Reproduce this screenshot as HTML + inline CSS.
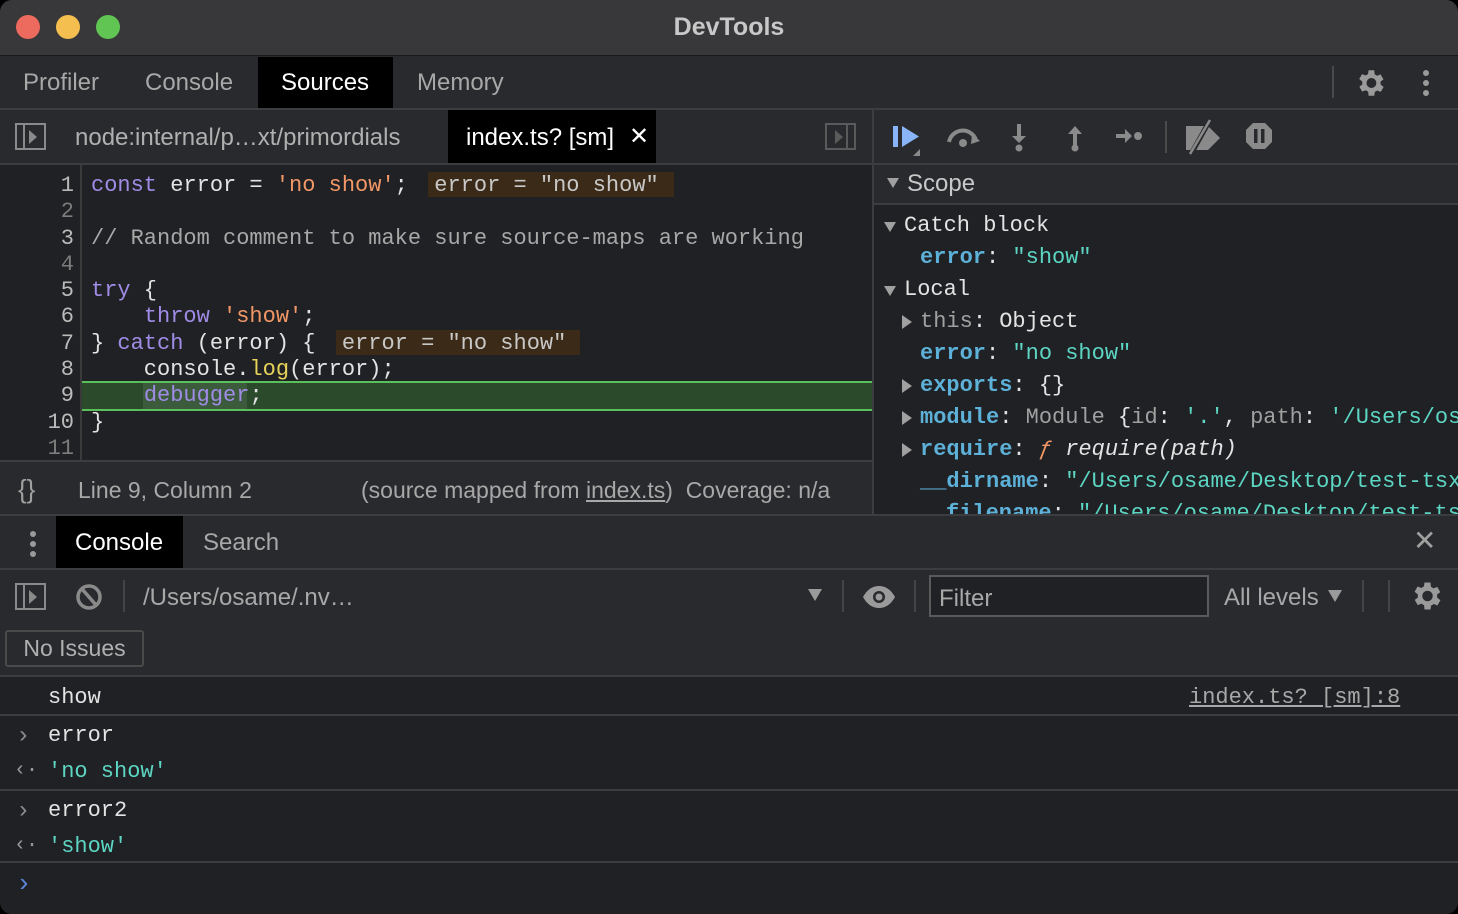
<!DOCTYPE html>
<html><head><meta charset="utf-8"><style>
*{margin:0;padding:0;box-sizing:border-box}
body{width:1458px;height:914px;background:#000;overflow:hidden;font-family:"Liberation Sans",sans-serif;position:relative}
.win{position:absolute;left:0;top:0;width:1458px;height:914px;background:#292a2d;border-radius:12px;overflow:hidden}
.abs{position:absolute}
.mono{font-family:"Liberation Mono",monospace}
.title{left:0;top:0;width:1458px;height:56px;background:#38383a;border-bottom:1px solid #1a1a1a}
.dot{width:24px;height:24px;border-radius:50%;top:15px}
.hl{height:2px;background:#3c3d40;left:0;width:1458px}
.tab{font-size:24px;color:#a8a8a8;top:57px;height:51px;line-height:51px}
.code{font-size:22px;line-height:26.3px;color:#e3e3e3;white-space:pre}
.kw{color:#a08ce6}.str{color:#f29766}.cm{color:#a8a8a8}.fn{color:#e6d35a}
.ln{color:#7d7d7d;font-size:22px;text-align:right;width:74px;white-space:pre;line-height:26.3px}
.sc{font-size:22px;white-space:pre;color:#e3e3e3;line-height:32px;height:32px;position:absolute}
.k{color:#5db0d7;font-weight:bold}.s{color:#5cd5c3}.g{color:#a0a0a0}
.tri{position:absolute;left:-20px;top:12px;width:0;height:0;border-left:6px solid transparent;border-right:6px solid transparent;border-top:10px solid #a0a0a0}
.trr{position:absolute;left:-18px;top:9px;width:0;height:0;border-top:7px solid transparent;border-bottom:7px solid transparent;border-left:10px solid #a0a0a0}
</style></head><body><div class="win">
<div class="abs title"></div>
<div class="abs dot" style="left:16px;background:#ed6a5e"></div>
<div class="abs dot" style="left:56px;background:#f5bf4f"></div>
<div class="abs dot" style="left:96px;background:#61c554"></div>
<div class="abs" style="left:0;width:1458px;top:13px;text-align:center;color:#c8c8c8;font-size:25px;font-weight:bold">DevTools</div>

<div class="abs" style="left:258px;top:57px;width:135px;height:51px;background:#000"></div>
<div class="abs tab" style="left:23px">Profiler</div>
<div class="abs tab" style="left:145px">Console</div>
<div class="abs tab" style="left:281px;color:#fff">Sources</div>
<div class="abs tab" style="left:417px">Memory</div>
<div class="abs" style="left:1332px;top:66px;width:2px;height:32px;background:#4a4a4a"></div>
<svg class="abs" style="left:1353px;top:66px" width="34" height="34" viewBox="0 0 24 24"><path fill="#9a9a9a" d="M19.4 13a7.5 7.5 0 000-2l2.1-1.6-2-3.5-2.5 1a7.4 7.4 0 00-1.7-1L15 3h-4l-.4 2.7a7.4 7.4 0 00-1.7 1l-2.5-1-2 3.5L6.6 11a7.5 7.5 0 000 2l-2.1 1.6 2 3.5 2.5-1a7.4 7.4 0 001.7 1L11 21h4l.4-2.7a7.4 7.4 0 001.7-1l2.5 1 2-3.5zM13 15.5a3.5 3.5 0 110-7 3.5 3.5 0 010 7z"/></svg>
<div class="abs" style="left:1423px;top:70px;width:6px;height:6px;border-radius:50%;background:#9a9a9a;box-shadow:0 10px 0 #9a9a9a,0 20px 0 #9a9a9a"></div>
<div class="abs hl" style="top:108px"></div>

<!-- file tabs -->
<svg class="abs" style="left:15px;top:123px" width="32" height="28"><rect x="1" y="1" width="29" height="25" fill="none" stroke="#8a8a8a" stroke-width="2"/><line x1="9" y1="1" x2="9" y2="26" stroke="#8a8a8a" stroke-width="2"/><path d="M14 7l8 7-8 7z" fill="#8a8a8a"/></svg>
<div class="abs" style="left:75px;top:111px;height:53px;line-height:53px;font-size:24px;color:#b0b0b0">node:internal/p…xt/primordials</div>
<div class="abs" style="left:448px;top:110px;width:208px;height:53px;background:#000"></div>
<div class="abs" style="left:466px;top:111px;height:53px;line-height:53px;font-size:24px;color:#fff">index.ts? [sm]</div>
<div class="abs" style="left:629px;top:111px;height:53px;line-height:51px;font-size:24px;color:#fff">✕</div>
<svg class="abs" style="left:825px;top:123px" width="32" height="28"><rect x="1" y="1" width="29" height="25" fill="none" stroke="#5a5a5a" stroke-width="2"/><line x1="22" y1="1" x2="22" y2="26" stroke="#5a5a5a" stroke-width="2"/><path d="M10 7l8 7-8 7z" fill="#5a5a5a"/></svg>
<div class="abs" style="left:0;top:163px;width:873px;height:2px;background:#3c3d40"></div>

<!-- editor -->
<div class="abs" style="left:0;top:165px;width:873px;height:295px;background:#202124"></div>
<div class="abs" style="left:80px;top:165px;width:2px;height:295px;background:#3a3a3a"></div>
<div class="abs" style="left:82px;top:381px;width:791px;height:30px;background:#2b4a2b;border-top:2px solid #5bbf5b;border-bottom:2px solid #5bbf5b"></div>
<div class="abs" style="left:428px;top:172px;width:246px;height:25px;background:#3b2a17"></div>
<div class="abs" style="left:336px;top:330px;width:244px;height:25px;background:#3b2a17"></div>
<div class="abs" style="left:143px;top:383px;width:104px;height:26px;background:#3c5a3c"></div>
<div class="abs mono ln" style="left:0;top:173px"><span style="color:#bbb">1</span>
2
<span style="color:#bbb">3</span>
4
<span style="color:#bbb">5
6
7
8
9
10</span>
11</div>
<div class="abs mono code" style="left:91px;top:173px"><span class="kw">const</span> error = <span class="str">'no show'</span>;  <span style="color:#c8c8c8">error = "no show"</span>

<span class="cm">// Random comment to make sure source-maps are working</span>

<span class="kw">try</span> {
    <span class="kw">throw</span> <span class="str">'show'</span>;
} <span class="kw">catch</span> (error) {  <span style="color:#c8c8c8">error = "no show"</span>
    console.<span class="fn">log</span>(error);
    <span class="kw">debugger</span>;
}</div>
<div class="abs" style="left:0;top:460px;width:873px;height:2px;background:#3c3d40"></div>
<div class="abs" style="left:18px;top:474px;font-size:26px;color:#a0a0a0">{}</div>
<div class="abs" style="left:78px;top:477px;font-size:23px;color:#a8a8a8">Line 9, Column 2</div>
<div class="abs" style="left:361px;top:477px;font-size:23px;color:#a8a8a8">(source mapped from <u>index.ts</u>)&nbsp; Coverage: n/a</div>

<!-- right pane -->
<div class="abs" style="left:872px;top:109px;width:2px;height:406px;background:#3c3d40"></div>
<svg class="abs" style="left:892px;top:122px" width="300" height="36">
<rect x="1" y="4" width="5" height="21" fill="#8ab4f8"/><path d="M10 4l17 10.5L10 25z" fill="#8ab4f8"/><path d="M28 34v-7l-7 7z" fill="#8a8a8a"/>
<path d="M57 20a14 14 0 0 1 27 -2" fill="none" stroke="#8a8a8a" stroke-width="4"/><path d="M80 12l8 7-9 3z" fill="#8a8a8a"/><circle cx="71" cy="21" r="4" fill="#8a8a8a"/>
<path d="M125 2v12h-5l7 7 7-7h-5V2z" fill="#8a8a8a"/><circle cx="127" cy="26" r="3.5" fill="#8a8a8a"/>
<path d="M181 24V12h-5l7-8 7 8h-5v12z" fill="#8a8a8a"/><circle cx="183" cy="26" r="3.5" fill="#8a8a8a"/>
<path d="M224 12h9v-5l7 7-7 7v-5h-9z" fill="#8a8a8a"/><circle cx="246" cy="14" r="4" fill="#8a8a8a"/>
</svg>
<div class="abs" style="left:1165px;top:121px;width:2px;height:32px;background:#4a4a4a"></div>
<svg class="abs" style="left:1184px;top:118px" width="100" height="38"><path d="M2 8h22l12 12-12 12H2z" fill="#8a8a8a"/><line x1="6" y1="38" x2="26" y2="2" stroke="#292a2d" stroke-width="5"/><line x1="6" y1="36" x2="26" y2="2" stroke="#8a8a8a" stroke-width="2.5"/>
<path d="M69 5h12l7 7v12l-7 7H69l-7-7V12z" fill="#8a8a8a"/><rect x="70" y="11" width="3.5" height="14" fill="#292a2d"/><rect x="77" y="11" width="3.5" height="14" fill="#292a2d"/></svg>
<div class="abs" style="left:874px;top:163px;width:584px;height:2px;background:#3c3d40"></div>
<div class="abs" style="left:887px;top:178px;width:0;height:0;border-left:6px solid transparent;border-right:6px solid transparent;border-top:10px solid #a0a0a0"></div>
<div class="abs" style="left:907px;top:170px;font-size:24px;color:#c8c8c8">Scope</div>
<div class="abs" style="left:874px;top:203px;width:584px;height:2px;background:#3c3d40"></div>
<div class="abs" style="left:874px;top:205px;width:584px;height:309px;background:#202124;overflow:hidden">
<div class="mono sc" style="left:30px;top:5px"><span class="tri"></span>Catch block</div>
<div class="mono sc" style="left:46px;top:37px"><span class="k">error</span>: <span class="s">"show"</span></div>
<div class="mono sc" style="left:30px;top:69px"><span class="tri"></span>Local</div>
<div class="mono sc" style="left:46px;top:101px"><span class="trr"></span><span class="g">this</span>: Object</div>
<div class="mono sc" style="left:46px;top:133px"><span class="k">error</span>: <span class="s">"no show"</span></div>
<div class="mono sc" style="left:46px;top:165px"><span class="trr"></span><span class="k">exports</span>: {}</div>
<div class="mono sc" style="left:46px;top:197px"><span class="trr"></span><span class="k">module</span>: <span class="g">Module</span> {<span class="g">id</span>: <span class="s">'.'</span>, <span class="g">path</span>: <span class="s">'/Users/osame/Desktop</span></div>
<div class="mono sc" style="left:46px;top:229px"><span class="trr"></span><span class="k">require</span>: <i style="color:#f29766">ƒ</i> <i>require(path)</i></div>
<div class="mono sc" style="left:46px;top:261px"><span class="k">__dirname</span>: <span class="s">"/Users/osame/Desktop/test-tsx"</span></div>
<div class="mono sc" style="left:72px;top:293px"><span class="k">filename</span>: <span class="s">"/Users/osame/Desktop/test-tsx"</span></div>
</div>

<!-- drawer -->
<div class="abs hl" style="top:514px"></div>
<div class="abs" style="left:30px;top:531px;width:6px;height:6px;border-radius:50%;background:#9a9a9a;box-shadow:0 10px 0 #9a9a9a,0 20px 0 #9a9a9a"></div>
<div class="abs" style="left:56px;top:516px;width:127px;height:52px;background:#000"></div>
<div class="abs" style="left:75px;top:517px;height:52px;line-height:52px;font-size:24px;color:#fff">Console</div>
<div class="abs" style="left:203px;top:517px;height:52px;line-height:52px;font-size:24px;color:#a8a8a8">Search</div>
<div class="abs" style="left:1413px;top:524px;font-size:28px;color:#a0a0a0">✕</div>
<div class="abs hl" style="top:568px"></div>
<svg class="abs" style="left:15px;top:583px" width="32" height="28"><rect x="1" y="1" width="29" height="25" fill="none" stroke="#8a8a8a" stroke-width="2"/><line x1="9" y1="1" x2="9" y2="26" stroke="#8a8a8a" stroke-width="2"/><path d="M14 7l8 7-8 7z" fill="#8a8a8a"/></svg>
<svg class="abs" style="left:75px;top:583px" width="28" height="28"><circle cx="14" cy="14" r="11" fill="none" stroke="#8a8a8a" stroke-width="3.5"/><line x1="7" y1="6" x2="21" y2="22" stroke="#8a8a8a" stroke-width="3.5"/></svg>
<div class="abs" style="left:123px;top:580px;width:2px;height:32px;background:#444"></div>
<div class="abs" style="left:143px;top:584px;font-size:24px;color:#a8a8a8">/Users/osame/.nv…</div>
<div class="abs" style="left:808px;top:589px;width:0;height:0;border-left:7px solid transparent;border-right:7px solid transparent;border-top:12px solid #9a9a9a"></div>
<div class="abs" style="left:842px;top:580px;width:2px;height:32px;background:#444"></div>
<svg class="abs" style="left:862px;top:585px" width="34" height="24"><path d="M1 12C6 3 12 1 17 1s11 2 16 11c-5 9-11 11-16 11S6 21 1 12z" fill="#9a9a9a"/><circle cx="17" cy="12" r="6" fill="#292a2d"/><circle cx="17" cy="12" r="3.5" fill="#9a9a9a"/></svg>
<div class="abs" style="left:914px;top:580px;width:2px;height:32px;background:#444"></div>
<div class="abs" style="left:929px;top:575px;width:280px;height:42px;background:#202124;border:2px solid #5a5a5a;font-size:24px;color:#a8a8a8;padding:8px 8px">Filter</div>
<div class="abs" style="left:1224px;top:584px;font-size:24px;color:#a8a8a8">All levels</div>
<div class="abs" style="left:1328px;top:590px;width:0;height:0;border-left:7px solid transparent;border-right:7px solid transparent;border-top:12px solid #9a9a9a"></div>
<div class="abs" style="left:1362px;top:580px;width:2px;height:32px;background:#444"></div>
<div class="abs" style="left:1388px;top:580px;width:2px;height:32px;background:#444"></div>
<svg class="abs" style="left:1408px;top:578px" width="36" height="36" viewBox="0 0 24 24"><path fill="#9a9a9a" d="M19.4 13a7.5 7.5 0 000-2l2.1-1.6-2-3.5-2.5 1a7.4 7.4 0 00-1.7-1L15 3h-4l-.4 2.7a7.4 7.4 0 00-1.7 1l-2.5-1-2 3.5L6.6 11a7.5 7.5 0 000 2l-2.1 1.6 2 3.5 2.5-1a7.4 7.4 0 001.7 1L11 21h4l.4-2.7a7.4 7.4 0 001.7-1l2.5 1 2-3.5zM13 15.5a3.5 3.5 0 110-7 3.5 3.5 0 010 7z"/></svg>
<div class="abs" style="left:5px;top:630px;width:139px;height:37px;border:2px solid #4a4a4a;border-radius:3px;font-size:23px;color:#b0b0b0;text-align:center;line-height:33px">No Issues</div>
<div class="abs hl" style="top:675px"></div>
<div class="abs" style="left:0;top:677px;width:1458px;height:237px;background:#202124"></div>
<div class="abs mono" style="left:48px;top:685px;font-size:22px;color:#e3e3e3">show</div>
<div class="abs mono" style="left:1189px;top:685px;font-size:22px;color:#a8a8a8;text-decoration:underline">index.ts? [sm]:8</div>
<div class="abs hl" style="top:714px"></div>
<div class="abs mono" style="left:16px;top:723px;font-size:24px;color:#8a8a8a">›</div>
<div class="abs mono" style="left:48px;top:723px;font-size:22px;color:#e3e3e3">error</div>
<div class="abs mono" style="left:14px;top:759px;font-size:20px;color:#9a9a9a">‹·</div>
<div class="abs mono" style="left:48px;top:759px;font-size:22px;color:#5cd5c3">'no show'</div>
<div class="abs hl" style="top:789px"></div>
<div class="abs mono" style="left:16px;top:798px;font-size:24px;color:#8a8a8a">›</div>
<div class="abs mono" style="left:48px;top:798px;font-size:22px;color:#e3e3e3">error2</div>
<div class="abs mono" style="left:14px;top:834px;font-size:20px;color:#9a9a9a">‹·</div>
<div class="abs mono" style="left:48px;top:834px;font-size:22px;color:#5cd5c3">'show'</div>
<div class="abs hl" style="top:861px"></div>
<div class="abs mono" style="left:16px;top:869px;font-size:26px;color:#5a86d6">›</div>
</div></body></html>
